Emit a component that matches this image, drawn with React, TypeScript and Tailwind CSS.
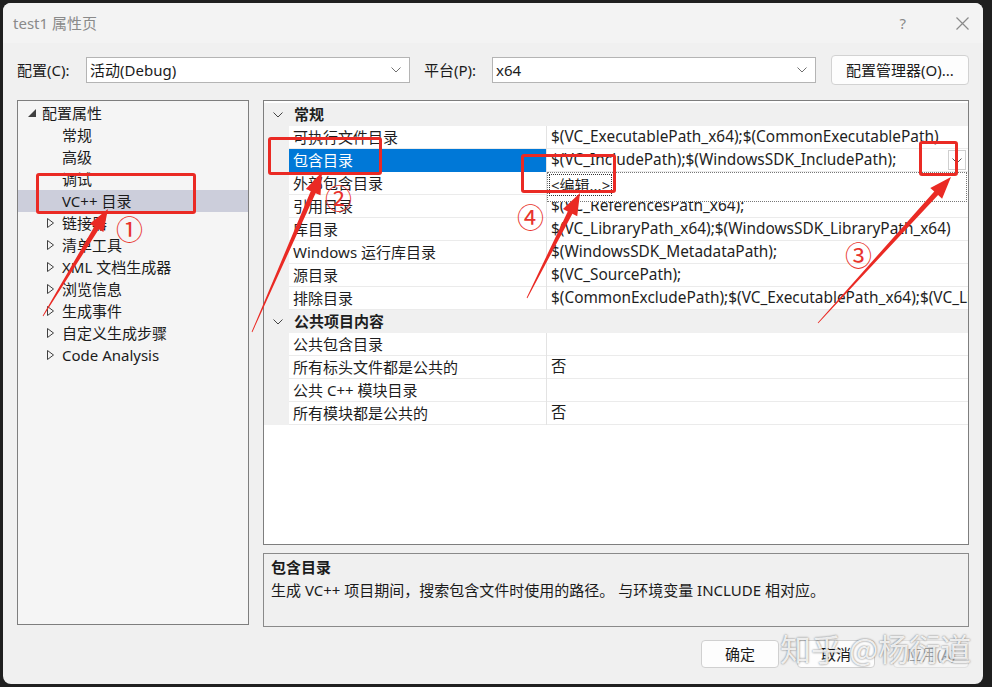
import React from "react";

const font = "font-['Noto_Sans','Noto_Sans_CJK_SC',sans-serif]";

const treeItems: { label: string; kind: "leaf" | "closed" }[] = [
  { label: "常规", kind: "leaf" },
  { label: "高级", kind: "leaf" },
  { label: "调试", kind: "leaf" },
  { label: "VC++ 目录", kind: "leaf" },
  { label: "链接器", kind: "closed" },
  { label: "清单工具", kind: "closed" },
  { label: "XML 文档生成器", kind: "closed" },
  { label: "浏览信息", kind: "closed" },
  { label: "生成事件", kind: "closed" },
  { label: "自定义生成步骤", kind: "closed" },
  { label: "Code Analysis", kind: "closed" },
];

const generalRows = [
  ["可执行文件目录", "$(VC_ExecutablePath_x64);$(CommonExecutablePath)"],
  ["包含目录", "$(VC_IncludePath);$(WindowsSDK_IncludePath);"],
  ["外部包含目录", "$(VC_IncludePath);$(WindowsSDK_IncludePath);"],
  ["引用目录", "$(VC_ReferencesPath_x64);"],
  ["库目录", "$(VC_LibraryPath_x64);$(WindowsSDK_LibraryPath_x64)"],
  ["Windows 运行库目录", "$(WindowsSDK_MetadataPath);"],
  ["源目录", "$(VC_SourcePath);"],
  ["排除目录", "$(CommonExcludePath);$(VC_ExecutablePath_x64);$(VC_LibraryPath_x64);"],
];

const publicRows = [
  ["公共包含目录", ""],
  ["所有标头文件都是公共的", "否"],
  ["公共 C++ 模块目录", ""],
  ["所有模块都是公共的", "否"],
];

const Chevron = ({ className = "" }: { className?: string }) => (
  <svg width="10" height="6" viewBox="0 0 10 6" className={className}>
    <path d="M0.5 0.5 L5 5 L9.5 0.5" fill="none" stroke="currentColor" strokeWidth="1" />
  </svg>
);

const Select = ({ value }: { value: string }) => (
  <div className="flex h-[26px] w-[324px] items-center justify-between border border-[#b4b4b4] bg-white pl-[3px] pr-[8px] text-[15px] text-[#1b1b1b]">
    <span>{value}</span>
    <Chevron className="text-[#707070]" />
  </div>
);

const CategoryRow = ({ label }: { label: string }) => (
  <div className="flex h-[23px] items-center bg-[#f0f0f0]">
    <div className="flex w-[25px] justify-center pl-[2px]">
      <Chevron className="text-[#444]" />
    </div>
    <span className="pl-[5px] text-[15px] font-bold text-[#1e1e1e]">{label}</span>
  </div>
);

const PropRow = ({
  name,
  value,
  selected,
}: {
  name: string;
  value: string;
  selected?: boolean;
}) => (
  <div className="flex h-[23px] bg-[#f0f0f0]">
    <div className="w-[25px] shrink-0" />
    <div
      className={`flex w-[257px] shrink-0 items-center border-b pl-[4px] text-[15px] ${
        selected ? "border-[#0078d7] bg-[#0078d7] text-white" : "border-[#ebebeb] bg-white text-[#1e1e1e]"
      }`}
    >
      {name}
    </div>
    <div className="w-px shrink-0 bg-[#e3e3e3]" />
    <div className="relative flex min-w-0 flex-1 items-center overflow-hidden border-b border-[#ebebeb] bg-white pl-[4px] text-[15.4px] whitespace-nowrap text-[#1e1e1e]">
      {value}
      {selected && (
        <div className="absolute top-[1px] right-[2px] flex h-[20px] w-[18px] items-end justify-center border border-[#cfcfcf] bg-white pb-[5px] text-[#555]">
          <Chevron />
        </div>
      )}
    </div>
  </div>
);

const Arrow = ({ x1, y1, x2, y2 }: { x1: number; y1: number; x2: number; y2: number }) => {
  const dx = x2 - x1;
  const dy = y2 - y1;
  const len = Math.hypot(dx, dy);
  const ux = dx / len;
  const uy = dy / len;
  const nx = -uy;
  const ny = ux;
  const headLen = 22;
  const headW = 8;
  const bx = x2 - ux * headLen;
  const by = y2 - uy * headLen;
  const shaftW = 2.6;
  const pts = [
    [x1 + nx * 0.4, y1 + ny * 0.4],
    [bx + nx * shaftW, by + ny * shaftW],
    [bx + nx * headW, by + ny * headW],
    [x2, y2],
    [bx - nx * headW, by - ny * headW],
    [bx - nx * shaftW, by - ny * shaftW],
    [x1 - nx * 0.4, y1 - ny * 0.4],
  ]
    .map((p) => p.join(","))
    .join(" ");
  return <polygon points={pts} fill="#ea2a24" />;
};

const Annot = ({ x, y, w, h }: { x: number; y: number; w: number; h: number }) => (
  <div
    className="absolute rounded-[3px] border-[3px] border-[#ea2a24]"
    style={{ left: x, top: y, width: w, height: h }}
  />
);

const Num = ({ x, y, n }: { x: number; y: number; n: string }) => (
  <div
    className="absolute text-[27px] leading-none text-[#e8332c] font-['Noto_Sans_CJK_SC',sans-serif]"
    style={{ left: x, top: y }}
  >
    {n}
  </div>
);

export default function App() {
  return (
    <div className={`relative h-[687px] w-[992px] overflow-hidden bg-[#1f1f1f] pt-[3px] pr-[9px] pb-[3px] pl-[3px] ${font}`}>
      <div className="flex h-full flex-col rounded-[8px] bg-[#f0f0f0]">
        {/* title bar */}
        <div className="flex h-[40px] items-center justify-between rounded-t-[8px] bg-[#f3f3f3] pl-[10px] pr-[14px]">
          <span className="text-[15px] text-[#8a8a8a]">test1 属性页</span>
          <div className="flex items-center gap-[50px] text-[#8a8a8a]">
            <span className="text-[15px]">?</span>
            <svg width="13" height="13" viewBox="0 0 13 13">
              <path d="M0.5 0.5 L12.5 12.5 M12.5 0.5 L0.5 12.5" stroke="#8a8a8a" strokeWidth="1.2" />
            </svg>
          </div>
        </div>

        {/* config row */}
        <div className="mt-[12px] flex items-center pl-[14px] text-[15px] text-[#1b1b1b]">
          <span className="w-[69px]">配置(C):</span>
          <Select value="活动(Debug)" />
          <span className="ml-[14px] w-[68px]">平台(P):</span>
          <Select value="x64" />
          <div className="ml-[15px] flex h-[30px] w-[138px] items-center justify-center rounded-[4px] border border-[#d2d2d2] bg-[#fdfdfd]">
            配置管理器(O)...
          </div>
        </div>

        {/* main area */}
        <div className="mt-[15px] flex items-start pl-[14px]">
          {/* tree */}
          <div className="h-[525px] w-[232px] border border-[#7e7e7e] bg-[#f5f5f5] pt-[1px] text-[15px] text-[#1b1b1b]">
            <div className="flex h-[22px] items-center">
              <svg width="8" height="8" viewBox="0 0 8 8" className="ml-[10px] mr-[6px]">
                <path d="M8 0 L8 8 L0 8 Z" fill="#404040" />
              </svg>
              <span>配置属性</span>
            </div>
            {treeItems.map((it) => (
              <div
                key={it.label}
                className={`flex h-[22px] items-center ${it.label === "VC++ 目录" ? "bg-[#cccedb]" : ""}`}
              >
                <div className="flex w-[44px] justify-end pr-[8px]">
                  {it.kind === "closed" && (
                    <svg width="7" height="10" viewBox="0 0 7 10">
                      <path d="M0.5 0.5 L6.5 5 L0.5 9.5 Z" fill="none" stroke="#404040" strokeWidth="1" />
                    </svg>
                  )}
                </div>
                <span>{it.label}</span>
              </div>
            ))}
          </div>

          <div className="ml-[14px] flex w-[706px] flex-col">
            {/* property grid */}
            <div className="relative h-[445px] border border-[#7e7e7e] bg-white pt-[2px]">
              <CategoryRow label="常规" />
              {generalRows.map(([n, v]) => (
                <PropRow key={n} name={n} value={v} selected={n === "包含目录"} />
              ))}
              <CategoryRow label="公共项目内容" />
              {publicRows.map(([n, v]) => (
                <PropRow key={n} name={n} value={v} />
              ))}

              {/* dropdown popup */}
              <div className="absolute top-[71px] left-[283px] h-[30px] w-[420px] border border-dotted border-[#777] bg-white">
                <div className="ml-[1px] mt-[1px] inline-block border border-dotted border-[#333] px-[1px] text-[15px] leading-[20px] text-[#1e1e1e]">
                  &lt;编辑...&gt;
                </div>
              </div>
            </div>

            {/* description */}
            <div className="mt-[8px] h-[74px] border border-[#8a8a8a] bg-[#f0f0f0] px-[7px] pt-[2px] text-[#1b1b1b]">
              <div className="text-[15px] font-bold leading-[22px]">包含目录</div>
              <div className="mt-[1px] text-[15px] leading-[22px]">
                生成 VC++ 项目期间，搜索包含文件时使用的路径。 与环境变量 INCLUDE 相对应。
              </div>
            </div>
          </div>
        </div>

        {/* buttons */}
        <div className="mt-[13px] flex justify-end gap-[18px] pr-[14px] text-[15px]">
          <div className="flex h-[28px] w-[78px] items-center justify-center rounded-[4px] border border-[#d0d0d0] bg-[#fdfdfd] text-[#1b1b1b]">
            确定
          </div>
          <div className="flex h-[28px] w-[78px] items-center justify-center rounded-[4px] border border-[#d0d0d0] bg-[#fdfdfd] text-[#1b1b1b]">
            取消
          </div>
          <div className="flex h-[28px] w-[76px] items-center justify-center rounded-[4px] border border-[#e0e0e0] bg-[#f5f5f5] text-[#a0a0a0]">
            应用(A)
          </div>
        </div>
      </div>

      {/* annotations */}
      <Annot x={36} y={173} w={160} h={41} />
      <Annot x={268} y={137} w={114} h={38} />
      <Annot x={521} y={154} w={95} h={39} />
      <Annot x={919} y={141} w={39} h={35} />
      <Num x={116} y={215} n="①" />
      <Num x={325} y={184} n="②" />
      <Num x={845} y={241} n="③" />
      <Num x={517} y={203} n="④" />
      <svg className="pointer-events-none absolute top-0 left-0" width="992" height="687">
        <Arrow x1={43} y1={316} x2={108} y2={209} />
        <Arrow x1={252} y1={332} x2={322} y2={172} />
        <Arrow x1={818} y1={323} x2={951} y2={177} />
        <Arrow x1={527} y1={298} x2={580} y2={193} />
      </svg>

      {/* watermark */}
      <div className="pointer-events-none absolute top-[632px] left-[780px] text-[31px] leading-none whitespace-nowrap text-white/85 [text-shadow:0_0_2px_rgba(0,0,0,0.6)] font-['Noto_Sans_CJK_SC',sans-serif]">
        知乎 @杨衍道
      </div>
    </div>
  );
}
